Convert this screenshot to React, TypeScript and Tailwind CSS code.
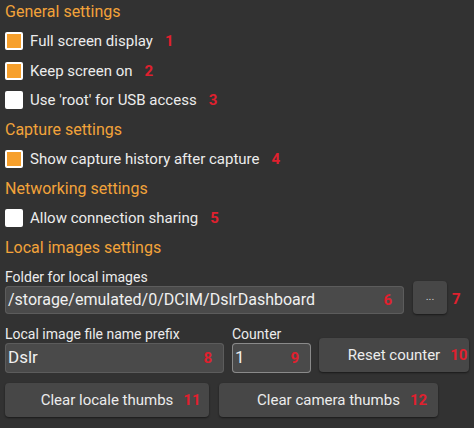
import type { ReactNode } from 'react';

const font = { fontFamily: 'Roboto, "Noto Sans", sans-serif' };

function Num({ n }: { n: string }) {
  return <span className="text-[15px] font-bold text-[#e0202e]">{n}</span>;
}

function Heading({ children }: { children: ReactNode }) {
  return (
    <div className="h-[29.5px] flex items-center text-[16px] text-[#f2a33a]">
      {children}
    </div>
  );
}

function CheckRow({ label, checked, n }: { label: string; checked: boolean; n: string }) {
  return (
    <div className="h-[29.5px] flex items-center">
      <div
        className={`w-[18px] h-[18px] rounded-[2px] border-2 border-white ${
          checked ? 'bg-[#f7a02c]' : 'bg-white'
        }`}
      />
      <span className="ml-[7px] text-[15px] text-[#ececec]">{label}</span>
      <span className="ml-[12px]">
        <Num n={n} />
      </span>
    </div>
  );
}

function Field({
  value,
  n,
  className,
  textSize = 'text-[17px]',
}: {
  value: string;
  n: string;
  className: string;
  textSize?: string;
}) {
  return (
    <div
      className={`flex items-center justify-between rounded-[4px] pl-[3px] pr-[12px] bg-[#4a4a4a] shadow-[inset_0_0_0_1px_#5c5c5c] ${className}`}
    >
      <span className={`${textSize} text-[#f0f0f0]`}>{value}</span>
      <Num n={n} />
    </div>
  );
}

function Button({ label, n, className }: { label: string; n: string; className: string }) {
  return (
    <div
      className={`flex items-center justify-center rounded-[4px] bg-[#474747] shadow-[0_1px_2px_rgba(0,0,0,0.5)] ${className}`}
    >
      <span className="relative text-[15px] text-[#ececec]">
        {label}
        <span className="absolute left-full ml-[10px] top-0">
          <Num n={n} />
        </span>
      </span>
    </div>
  );
}

export default function App() {
  return (
    <div className="w-[474px] h-[428px] bg-[#323232] overflow-hidden" style={font}>
      <div className="px-[5px] -mt-[3px] flex flex-col">
        <Heading>General settings</Heading>
        <CheckRow label="Full screen display" checked n="1" />
        <CheckRow label="Keep screen on" checked n="2" />
        <CheckRow label="Use 'root' for USB access" checked={false} n="3" />
        <Heading>Capture settings</Heading>
        <CheckRow label="Show capture history after capture" checked n="4" />
        <Heading>Networking settings</Heading>
        <CheckRow label="Allow connection sharing" checked={false} n="5" />
        <Heading>Local images settings</Heading>
        <div className="h-[29.5px] flex items-center text-[14px] text-[#ececec]">
          Folder for local images
        </div>

        {/* folder row */}
        <div className="-mt-[11px] flex items-end">
          <Field
            value="/storage/emulated/0/DCIM/DslrDashboard"
            n="6"
            textSize="text-[16px]"
            className="w-[399px] h-[28px]"
          />
          <div className="ml-[9px] w-[34px] h-[33px] rounded-[4px] bg-[#474747] shadow-[0_1px_2px_rgba(0,0,0,0.5)] flex items-center justify-center text-[11px] text-[#cfcfcf]">
            ...
          </div>
          <span className="ml-[5px] self-center mt-[3px]">
            <Num n="7" />
          </span>
        </div>

        {/* prefix / counter row */}
        <div className="mt-[12px] flex items-end">
          <div className="w-[219px] flex flex-col">
            <span className="h-[17px] leading-[17px] text-[14px] text-[#ececec]">
              Local image file name prefix
            </span>
            <Field value="Dslr" n="8" className="h-[30px]" />
          </div>
          <div className="ml-[8px] w-[79px] flex flex-col">
            <span className="h-[17px] leading-[17px] text-[14px] text-[#ececec]">Counter</span>
            <Field
              value="1"
              n="9"
              className="h-[30px] shadow-[inset_0_0_0_1px_#8a8a8a] bg-[#3e3e3e]"
            />
          </div>
          <Button label="Reset counter" n="10" className="ml-[8px] w-[150px] h-[34px] mb-[1px]" />
        </div>

        {/* clear buttons */}
        <div className="mt-[10px] flex">
          <Button label="Clear locale thumbs" n="11" className="w-[204px] h-[34px]" />
          <Button label="Clear camera thumbs" n="12" className="ml-[10px] w-[219px] h-[34px]" />
        </div>
      </div>
    </div>
  );
}
